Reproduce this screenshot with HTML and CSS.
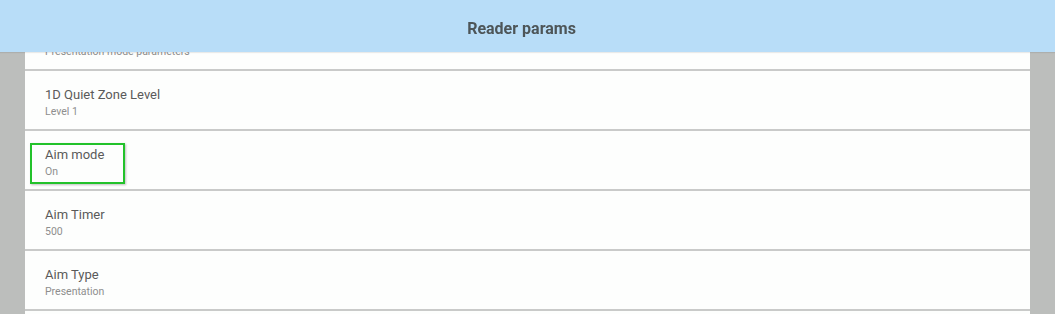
FILE: index.html
```html
<!DOCTYPE html>
<html lang="en">
<head>
    <meta charset="UTF-8">
    <meta name="viewport" content="width=device-width, initial-scale=1.0">
    <title>Reader params</title>
    <link rel="stylesheet" href="styles.css">
</head>
<body>
    <header class="app-bar">
        <h1>Reader params</h1>
    </header>

    <ul class="param-list">
        <li class="param-item">
            <p class="param-title">Presentation mode</p>
            <p class="param-value">Presentation mode parameters</p>
        </li>
        <li class="param-item">
            <p class="param-title">1D Quiet Zone Level</p>
            <p class="param-value">Level 1</p>
        </li>
        <li class="param-item focused">
            <p class="param-title">Aim mode</p>
            <p class="param-value">On</p>
            <span class="focus-box"></span>
        </li>
        <li class="param-item">
            <p class="param-title">Aim Timer</p>
            <p class="param-value">500</p>
        </li>
        <li class="param-item">
            <p class="param-title">Aim Type</p>
            <p class="param-value">Presentation</p>
        </li>
        <li class="param-item"></li>
    </ul>
</body>
</html>
```

FILE: styles.css
```css
html, body {
    margin: 0;
    height: 100%;
    overflow: hidden;
}
body {
    font-family: 'Roboto', 'Liberation Sans', sans-serif;
    background-color: #bcbebc;
    padding: 0 25px;
}
.app-bar {
    position: fixed;
    top: 0;
    left: 0;
    right: 0;
    height: 52px;
    background-color: #b8ddf8;
    box-shadow: 0 1px 1px rgba(0,0,0,0.08);
    display: flex;
    align-items: center;
    justify-content: center;
    z-index: 2;
}
.app-bar h1 {
    margin: 4px 0 0 -12px;
    font-size: 16px;
    font-weight: bold;
    color: #4d5558;
}
.param-list {
    list-style: none;
    margin: 11px 0 0;
    padding: 0;
    background-color: #fdfefd;
}
.param-item {
    position: relative;
    border-bottom: 2px solid #c9cac9;
    padding: 15px 0 0 20px;
    height: 43px;
}
.param-title {
    margin: 0;
    font-size: 13px;
    line-height: 17px;
    color: #5a5a5a;
}
.param-value {
    margin: 2px 0 0;
    font-size: 10.5px;
    line-height: 14px;
    color: #8e8e8e;
}
.focus-box {
    position: absolute;
    left: 5px;
    top: 12px;
    width: 91px;
    height: 37px;
    border: 2px solid #22c22a;
    box-shadow: 1px 1px 2px rgba(0,0,0,0.25);
}
```
